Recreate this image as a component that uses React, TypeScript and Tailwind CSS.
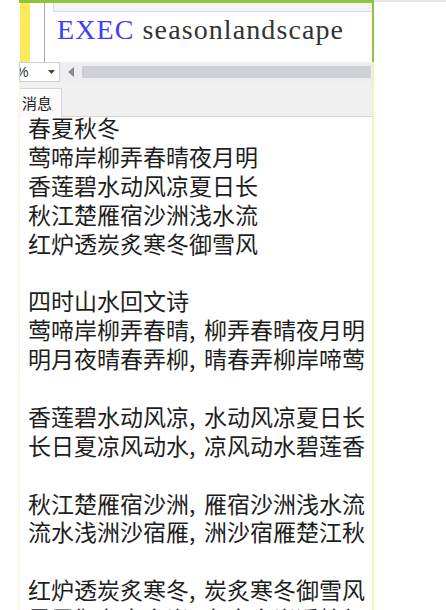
import { Fragment } from 'react'

const LINES = [
  '春夏秋冬',
  '莺啼岸柳弄春晴夜月明',
  '香莲碧水动风凉夏日长',
  '秋江楚雁宿沙洲浅水流',
  '红炉透炭炙寒冬御雪风',
  '',
  '四时山水回文诗',
  '莺啼岸柳弄春晴,柳弄春晴夜月明',
  '明月夜晴春弄柳,晴春弄柳岸啼莺',
  '',
  '香莲碧水动风凉,水动风凉夏日长',
  '长日夏凉风动水,凉风动水碧莲香',
  '',
  '秋江楚雁宿沙洲,雁宿沙洲浅水流',
  '流水浅洲沙宿雁,洲沙宿雁楚江秋',
  '',
  '红炉透炭炙寒冬,炭炙寒冬御雪风',
  '风雪御冬寒炙炭,冬寒炙炭透炉红',
]

const CJK = { fontFamily: '"Noto Sans CJK SC", "Noto Sans", sans-serif' }

function MessageLine({ text }: { text: string }) {
  if (!text) return <div className="h-[28.9px]" />
  const parts = text.split(',')
  return (
    <div className="h-[28.9px] whitespace-nowrap">
      {parts.map((p, i) => (
        <Fragment key={i}>
          {i > 0 && <span className="inline-block w-[15px]">,</span>}
          {p}
        </Fragment>
      ))}
    </div>
  )
}

export default function App() {
  return (
    <div className="flex h-[610px] w-[446px] overflow-hidden bg-white">
      <div className="w-[19px] shrink-0" />

      <div className="flex w-[355px] shrink-0 flex-col">
        {/* query editor */}
        <div className="flex h-[62px] shrink-0 border-t-[3px] border-r-2 border-[#8cc63f]">
          <div className="w-px bg-white" />
          <div className="w-[10px] bg-[#fde95c]" />
          <div className="w-[14px] bg-white" />
          <div className="w-px bg-[#a8a8a8]" />
          <div className="flex min-w-0 flex-1 flex-col">
            <div className="ml-[8px] h-[9px] border-b border-l border-[#dcdce4] bg-[#f4f4f8]" />
            <div
              className="mt-[4px] ml-[12px] whitespace-nowrap text-[28px] leading-none tracking-[1.1px] text-[#333]"
              style={{ fontFamily: '"Liberation Serif", serif' }}
            >
              <span className="text-[#3d3dff]">EXEC</span> seasonlandscape
            </div>
          </div>
        </div>

        {/* zoom + horizontal scrollbar */}
        <div className="flex h-[20px] shrink-0 items-center border-r-2 border-[#f6f2bc] bg-[#eeeef2]">
          <div className="flex h-full w-[41px] items-center overflow-hidden border border-[#cfd0d6] bg-white">
            <span className="-ml-[4px] text-[14px] text-[#333]" style={{ fontFamily: '"Liberation Sans", sans-serif' }}>
              %
            </span>
            <svg className="ml-auto mr-[4px]" width="7" height="4" viewBox="0 0 7 4">
              <path d="M0 0h7L3.5 4z" fill="#444" />
            </svg>
          </div>
          <svg className="ml-[8px]" width="6" height="10" viewBox="0 0 6 10">
            <path d="M6 0v10L0 5z" fill="#8a8a8e" />
          </svg>
          <div className="ml-[8px] mr-px h-[12px] flex-1 bg-[#cfd1d7]" />
        </div>

        {/* result tabs */}
        <div className="flex h-[35px] shrink-0 items-end border-r-2 border-l border-b border-r-[#f6f2bc] border-l-[#fbf6d2] border-b-[#d6d6d6] bg-[#f0f0f0]">
          <div
            className="relative -mb-px flex h-[29px] w-[42px] items-center border-t border-r border-[#d6d6d6] bg-[#fbfbfb] pl-[2px] text-[15px] text-[#222]"
            style={CJK}
          >
            消息
          </div>
        </div>

        {/* messages */}
        <div className="flex-1 overflow-hidden border-r-2 border-l border-r-[#f8f3b8] border-l-[#fbf6d2] pl-[8px]">
          <div className="-mt-[4px] text-[23px] leading-[28.9px] text-[#1e1e1e]" style={CJK}>
            {LINES.map((l, i) => (
              <MessageLine key={i} text={l} />
            ))}
          </div>
        </div>
      </div>

      <div className="flex-1 border-t-2 border-[#e6e6e6]" />
    </div>
  )
}
